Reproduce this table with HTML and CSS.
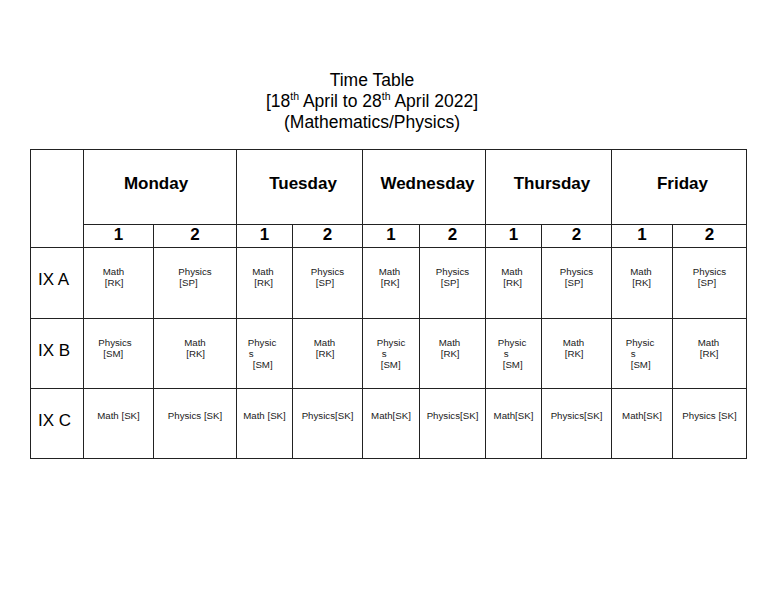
FILE: index.html
```html
<!DOCTYPE html>
<html lang="en">
<head>
<meta charset="utf-8">
<title>Time Table</title>
<link rel="stylesheet" href="styles.css">
</head>
<body>
<div class="page">
  <header class="title">
    <div>Time Table</div>
    <div>[18<sup>th</sup> April to 28<sup>th</sup> April 2022]</div>
    <div>(Mathematics/Physics)</div>
  </header>

  <div class="grid">
    <div class="corner"></div>
    <div class="day first">Monday</div>
    <div class="day">Tuesday</div>
    <div class="day">Wednesday</div>
    <div class="day">Thursday</div>
    <div class="day">Friday</div>

    <div class="num">1</div><div class="num">2</div>
    <div class="num">1</div><div class="num">2</div>
    <div class="num">1</div><div class="num">2</div>
    <div class="num">1</div><div class="num">2</div>
    <div class="num">1</div><div class="num">2</div>

    <div class="lab">IX A</div>
    <div class="cell"><div class="blk mr10"><span>Math</span><span class="o2">[RK]</span></div></div>
    <div class="cell"><div class="blk"><span>Physics</span><span class="o1">[SP]</span></div></div>
    <div class="cell"><div class="blk mr3"><span>Math</span><span class="o2">[RK]</span></div></div>
    <div class="cell"><div class="blk"><span>Physics</span><span class="o5">[SP]</span></div></div>
    <div class="cell"><div class="blk mr3"><span>Math</span><span class="o2">[RK]</span></div></div>
    <div class="cell"><div class="blk"><span>Physics</span><span class="o5">[SP]</span></div></div>
    <div class="cell"><div class="blk mr3"><span>Math</span><span class="o2">[RK]</span></div></div>
    <div class="cell"><div class="blk"><span>Physics</span><span class="o5">[SP]</span></div></div>
    <div class="cell"><div class="blk mr2"><span>Math</span><span class="o2">[RK]</span></div></div>
    <div class="cell"><div class="blk"><span>Physics</span><span class="o5">[SP]</span></div></div>

    <div class="lab">IX B</div>
    <div class="cell"><div class="blk mr7"><span>Physics</span><span class="o5">[SM]</span></div></div>
    <div class="cell"><div class="blk"><span>Math</span><span class="o2">[RK]</span></div></div>
    <div class="cell"><div class="blk mr5"><span>Physic</span><span class="o1">s</span><span class="o5">[SM]</span></div></div>
    <div class="cell"><div class="blk mr6"><span>Math</span><span class="o2">[RK]</span></div></div>
    <div class="cell"><div class="blk"><span>Physic</span><span class="o5">s</span><span class="o4">[SM]</span></div></div>
    <div class="cell"><div class="blk mr6"><span>Math</span><span class="o2">[RK]</span></div></div>
    <div class="cell"><div class="blk mr3"><span>Physic</span><span class="o6">s</span><span class="o5">[SM]</span></div></div>
    <div class="cell"><div class="blk mr6"><span>Math</span><span class="o2">[RK]</span></div></div>
    <div class="cell"><div class="blk mr4"><span>Physic</span><span class="o5">s</span><span class="o5">[SM]</span></div></div>
    <div class="cell"><div class="blk mr2"><span>Math</span><span class="o2">[RK]</span></div></div>

    <div class="lab">IX C</div>
    <div class="cell low">Math [SK]</div>
    <div class="cell low">Physics [SK]</div>
    <div class="cell low">Math [SK]</div>
    <div class="cell low">Physics[SK]</div>
    <div class="cell low">Math[SK]</div>
    <div class="cell low">Physics[SK]</div>
    <div class="cell low">Math[SK]</div>
    <div class="cell low">Physics[SK]</div>
    <div class="cell low">Math[SK]</div>
    <div class="cell low">Physics [SK]</div>
  </div>
</div>
</body>
</html>
```

FILE: styles.css
```css
html, body {
  margin: 0;
  padding: 0;
  background: #ffffff;
}

body {
  font-family: "Liberation Sans", Arial, sans-serif;
  color: #000;
}

.page {
  width: 768px;
  height: 594px;
  padding-top: 70px;
  box-sizing: border-box;
}

.title {
  padding-right: 24px;
  text-align: center;
  font-size: 17.5px;
  line-height: 21px;
}

.title sup {
  font-size: 10.5px;
  line-height: 0;
  vertical-align: 7px;
}

.grid {
  display: grid;
  grid-template-columns: 52px 69px 82px 55px 69px 56px 65px 55px 69px 60px 73px;
  grid-template-rows: 74px 22px 70px 69px 69px;
  gap: 1px;
  padding: 1px;
  background: #222;
  width: max-content;
  margin: 16px 0 0 30px;
}

.grid > div {
  background: #fff;
}

.corner {
  grid-row: span 2;
}

.day {
  grid-column: span 2;
  text-align: center;
  font-weight: bold;
  font-size: 17px;
  line-height: 20px;
  padding-top: 24px;
  padding-left: 7px;
}

.day.first {
  padding-left: 0;
  padding-right: 8px;
}

.num {
  text-align: center;
  font-weight: bold;
  font-size: 17px;
  line-height: 20px;
}

.lab {
  font-size: 17px;
  line-height: 20px;
  padding: 22px 0 0 7px;
}

.cell {
  display: flex;
  justify-content: center;
  align-items: flex-start;
  padding-top: 18px;
  font-size: 9.7px;
  line-height: 11px;
  color: #1a1a1a;
}

.cell.low {
  padding-top: 21px;
  white-space: nowrap;
}

.blk {
  display: flex;
  flex-direction: column;
  align-items: flex-start;
}

.o1 { margin-left: 1px; }
.o2 { margin-left: 2px; }
.o4 { margin-left: 4px; }
.o5 { margin-left: 5px; }
.o6 { margin-left: 6px; }

.mr2 { margin-right: 2px; }
.mr3 { margin-right: 3px; }
.mr4 { margin-right: 4px; }
.mr5 { margin-right: 5px; }
.mr6 { margin-right: 6px; }
.mr7 { margin-right: 7px; }
.mr10 { margin-right: 10px; }
```
